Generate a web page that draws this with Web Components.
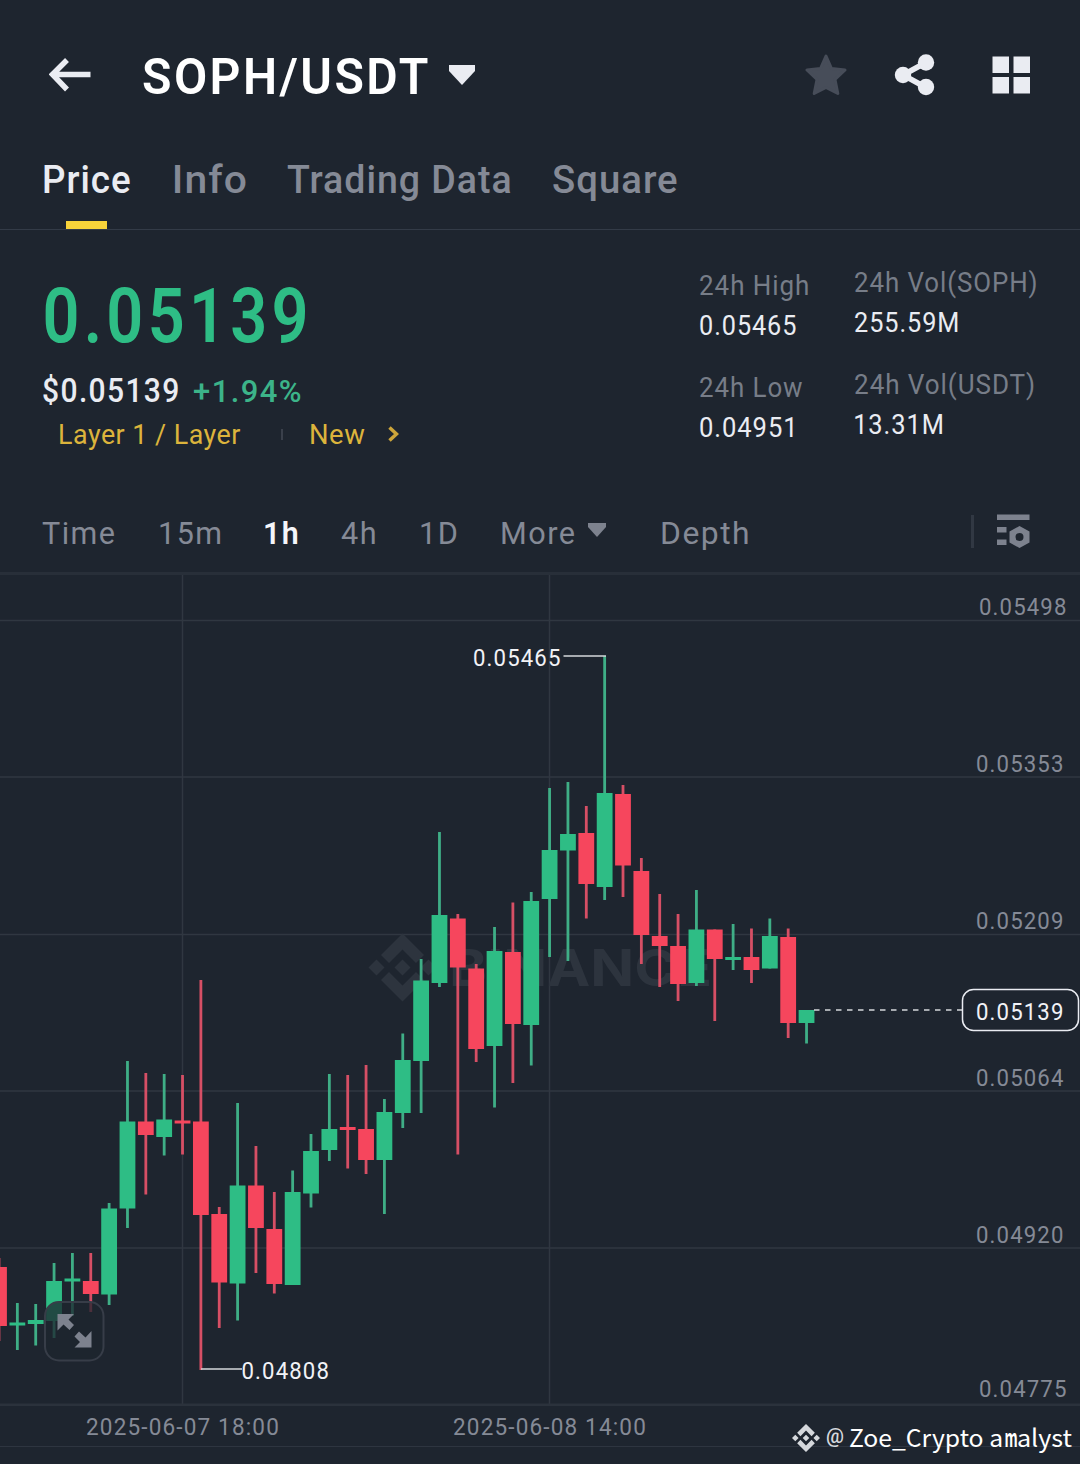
<!DOCTYPE html>
<html lang="en">
<head>
    <meta charset="utf-8">
    <title>SOPH/USDT</title>
    <style>
        body {
            margin: 0;
            background: #1e252f;
        }
    </style>
</head>
<body>
    <trade-page></trade-page>

    <script>
        /**
         * Text scaled horizontally so that its ink fills the given width.
         */
        customElements.define('fit-text', class FitText extends HTMLElement {
            _html = `
                <style>
                    :host { display: block; flex: none; }
                    span { display: inline-block; white-space: pre; transform-origin: 0 50%; }
                </style>
                <span><slot></slot></span>
            `;

            constructor() {
                super();
                this.attachShadow({ mode: 'open' });
                this.shadowRoot.innerHTML = this._html;
            }

            /**
             * Measures the text and sets the scale.
             */
            connectedCallback() {
                const width = Number(this.getAttribute('width'));
                const style = getComputedStyle(this);
                const spacing = parseFloat(style.letterSpacing) || 0;
                const context = document.createElement('canvas').getContext('2d');
                context.font = `${style.fontWeight} ${style.fontSize} ${style.fontFamily}`;
                const box = context.measureText(this.textContent);
                const ink = box.actualBoundingBoxLeft + box.actualBoundingBoxRight + spacing * (this.textContent.length - 1);
                const scale = width / ink;
                const shift = box.actualBoundingBoxLeft * scale;
                this.style.width = `${width}px`;
                this.shadowRoot.querySelector('span').style.transform = `translateX(${shift}px) scaleX(${scale})`;
            }
        });

        /**
         * Top bar with the back arrow, the pair and the actions.
         */
        customElements.define('pair-header', class PairHeader extends HTMLElement {
            _html = `
                <style>
                    :host {
                        display: flex;
                        align-items: center;
                        height: 150px;
                        padding: 0 50px 0 49px;
                        box-sizing: border-box;
                        color: #fff;
                        font-size: 49.500px;
                        font-weight: 600;
                        line-height: 60px;
                        letter-spacing: 2.500px;
                    }
                    svg { display: block; flex: none; fill: #eaecf2; }
                    fit-text { margin: 4px 21px 0 52px; }
                    .actions { display: flex; align-items: center; margin-left: auto; }
                    .share { margin: 0 56px 0 47px; }
                </style>
                <svg width="42" height="34" viewBox="0 0 42 34">
                    <path d="M3 16.500H41.500M18 2L3.500 16.500L18 31.500" fill="none" stroke="#eaecf2" stroke-width="5.500"/>
                </svg>
            `;

            _actions = `
                <svg width="26" height="20" viewBox="0 0 26 20"><path d="M0 0H26V6L13 20L0 6Z"/></svg>
                <div class="actions">
                    <svg width="42" height="42" viewBox="0 0 42 42">
                        <path d="M21 2L26.500 14.500L40 16L30 25.500L32.800 39.500L21 33.500L9.200 39.500L12 25.500L2 16L15.500 14.500Z" fill="#474d59" stroke="#474d59" stroke-width="3" stroke-linejoin="round"/>
                    </svg>
                    <svg class="share" width="42" height="42" viewBox="0 0 42 42">
                        <path d="M32 8.500L9 21L32 33.500" fill="none" stroke="#eaecf2" stroke-width="5.500"/>
                        <circle cx="9" cy="21" r="8.200"/>
                        <circle cx="32" cy="8.500" r="8.200"/>
                        <circle cx="32" cy="33" r="8.200"/>
                    </svg>
                    <svg width="38" height="38" viewBox="0 0 38 38">
                        <path d="M.5.500h16.500v16.500H.500zM21.500 .500h16.500v16.500H21.500zM.5 21h16.500v16.500H.500zM21.500 21h16.500v16.500H21.500z"/>
                    </svg>
                </div>
            `;

            constructor() {
                super();
                this.attachShadow({ mode: 'open' });
                const title = `<fit-text width="285">${this.getAttribute('pair')}</fit-text>`;
                this.shadowRoot.innerHTML = `${this._html}${title}${this._actions}`;
            }
        });

        /**
         * Page tabs.
         */
        customElements.define('page-tabs', class PageTabs extends HTMLElement {
            _html = `
                <style>
                    :host {
                        display: flex;
                        height: 80px;
                        box-sizing: border-box;
                        padding-left: 43.500px;
                        border-bottom: 1px solid #333b47;
                        color: #858a96;
                        font-size: 38.500px;
                        font-weight: 500;
                        line-height: 60px;
                        letter-spacing: 1px;
                    }
                    .tab { position: relative; margin-right: 41.500px; }
                    .first { margin-right: 45px; color: #eaecf2; }
                    .first::after {
                        content: "";
                        position: absolute;
                        left: 22.500px;
                        bottom: 0;
                        width: 41px;
                        height: 8px;
                        background: #f8d33a;
                    }
                </style>
                <div class="tab first"><fit-text width="86">Price</fit-text></div>
                <div class="tab"><fit-text width="71">Info</fit-text></div>
                <div class="tab"><fit-text width="224">Trading Data</fit-text></div>
                <div class="tab"><fit-text width="124">Square</fit-text></div>
            `;

            constructor() {
                super();
                this.attachShadow({ mode: 'open' });
                this.shadowRoot.innerHTML = this._html;
            }
        });

        /**
         * A label with its value below.
         */
        customElements.define('stat-item', class StatItem extends HTMLElement {
            _html = `
                <style>
                    :host { display: block; font-size: 27.500px; line-height: 40px; letter-spacing: 1px; color: #eaecf2; }
                    .label { color: #777d88; font-size: 28px; }
                </style>
            `;

            constructor() {
                super();
                this.attachShadow({ mode: 'open' });
                this.shadowRoot.innerHTML = `${this._html}
                    <fit-text class="label" width="${this.getAttribute('label-width')}">${this.getAttribute('label')}</fit-text>
                    <fit-text width="${this.getAttribute('value-width')}">${this.getAttribute('value')}</fit-text>
                `;
            }
        });

        /**
         * Last price and the 24h statistics.
         */
        customElements.define('price-summary', class PriceSummary extends HTMLElement {
            _html = `
                <style>
                    :host { display: flex; height: 260px; box-sizing: border-box; padding-left: 43px; }
                    .left { width: 657px; padding-top: 48px; }
                    .price { color: #2ebd85; font-size: 76px; font-weight: 600; line-height: 76px; letter-spacing: 5px; margin-left: 2px; }
                    .change { display: flex; gap: 16px; margin-top: 14.500px; font-size: 33.300px; font-weight: 500; line-height: 44px; letter-spacing: 1.500px; color: #eaecf2; }
                    .up { color: #3cb489; font-size: 32px; }
                    .tags { display: flex; align-items: center; margin: 2px 0 0 17px; font-size: 27.700px; line-height: 40px; letter-spacing: .500px; color: #dcb43c; }
                    .line { width: 2px; height: 11px; background: #3a404b; margin: 0 28px 0 41px; }
                    svg { display: block; margin: -2px 0 0 23px; }
                    .column { display: flex; flex-direction: column; gap: 22px; padding-top: 36px; width: 155px; }
                    .second { padding-top: 33px; }
                </style>
                <div class="left">
                    <fit-text class="price" width="260.500">0.05139</fit-text>
                    <div class="change">
                        <fit-text width="134.500">$0.05139</fit-text>
                        <fit-text class="up" width="107">+1.94%</fit-text>
                    </div>
                    <div class="tags">
                        <fit-text width="180">Layer 1 / Layer</fit-text>
                        <div class="line"></div>
                        <fit-text width="54">New</fit-text>
                        <svg width="11" height="16" viewBox="0 0 11 16"><path d="M1.500 1.500L8.500 8L1.500 14.500" fill="none" stroke="#cda53a" stroke-width="3.500"/></svg>
                    </div>
                </div>
                <div class="column">
                    <stat-item label="24h High" label-width="108" value="0.05465" value-width="96"></stat-item>
                    <stat-item label="24h Low" label-width="102.500" value="0.04951" value-width="92.500"></stat-item>
                </div>
                <div class="column second">
                    <stat-item label="24h Vol(SOPH)" label-width="181" value="255.59M" value-width="102.500"></stat-item>
                    <stat-item label="24h Vol(USDT)" label-width="178.500" value="13.31M" value-width="87"></stat-item>
                </div>
            `;

            constructor() {
                super();
                this.attachShadow({ mode: 'open' });
                this.shadowRoot.innerHTML = this._html;
            }
        });

        /**
         * Chart interval picker.
         */
        customElements.define('interval-bar', class IntervalBar extends HTMLElement {
            _html = `
                <style>
                    :host {
                        display: flex;
                        align-items: center;
                        height: 82px;
                        box-sizing: border-box;
                        padding: 0 50px 0 42px;
                        color: #858a96;
                        font-size: 32px;
                        line-height: 40px;
                        letter-spacing: 1.500px;
                    }
                    fit-text { margin: 4px 45.500px 0 0; }
                    .active { color: #f5f6fa; font-weight: 600; }
                    .more { margin-right: 14px; }
                    svg { display: block; fill: #7d828e; }
                    .caret { margin: -2px 56px 0 0; }
                    .line { width: 3px; height: 33px; background: #313843; margin: 0 23px 0 auto; }
                </style>
                <fit-text width="72">Time</fit-text>
                <fit-text width="60">15m</fit-text>
                <fit-text width="33" class="active" style="margin-right: 43px">1h</fit-text>
                <fit-text width="34">4h</fit-text>
                <fit-text width="36">1D</fit-text>
                <fit-text width="72" class="more">More</fit-text>
                <svg class="caret" width="18" height="14" viewBox="0 0 18 14"><path d="M0 0H18V4L9 14L0 4Z"/></svg>
                <fit-text width="86">Depth</fit-text>
                <div class="line"></div>
                <svg width="33" height="34" viewBox="0 0 33 34">
                    <path d="M0 .500H32.500V6H0ZM0 13H9.500V18.500H0ZM0 25.500H9.500V31H0Z"/>
                    <path fill-rule="evenodd" d="M22.500 12L32.500 17.500V28.500L22.500 34L12.500 28.500V17.500ZM22.500 19A4 4 0 0 0 22.500 27A4 4 0 0 0 22.500 19Z"/>
                </svg>
            `;

            constructor() {
                super();
                this.attachShadow({ mode: 'open' });
                this.shadowRoot.innerHTML = this._html;
            }
        });

        /**
         * Candlestick chart with its axes, drawn in page pixels from y = 572.
         */
        customElements.define('candle-chart', class CandleChart extends HTMLElement {
            _style = `
                <style>
                    :host { display: block; height: 892px; }
                    svg { display: block; font-size: 23.500px; letter-spacing: 1.200px; fill: #858a96; }
                    .grid { stroke: #303741; stroke-width: 1.500; }
                    .white { fill: #f1f2f6; }
                    .mark { fill: #2d343e; letter-spacing: 0; }
                </style>
            `;

            /**
             * Candles as [direction, high, body top, body bottom, low].
             */
            _candles = [
                ['r', 1258, 1267, 1326, 1341], ['g', 1303, 1322.5, 1325.5, 1350], ['g', 1304, 1320, 1324, 1345.5],
                ['g', 1263, 1281, 1321, 1338], ['g', 1253, 1278.5, 1281.5, 1316], ['r', 1253, 1281, 1294, 1312],
                ['g', 1203, 1208.5, 1294.5, 1305], ['g', 1061, 1121.5, 1208.5, 1228], ['r', 1073, 1121.5, 1135, 1194.5],
                ['g', 1074, 1119.5, 1137, 1155.5], ['r', 1075, 1120.5, 1123.5, 1154.5], ['r', 980, 1121.5, 1215, 1370],
                ['r', 1207, 1214, 1282.5, 1328], ['g', 1103, 1185.5, 1283.5, 1320.5], ['r', 1146, 1185.5, 1228, 1273],
                ['r', 1192, 1229, 1284, 1293.5], ['g', 1170.5, 1192, 1285, 1285], ['g', 1134, 1151, 1193.5, 1207.5],
                ['g', 1074, 1129, 1150, 1161], ['r', 1075, 1127, 1130, 1168.5], ['r', 1065, 1129, 1160, 1174],
                ['g', 1099, 1112, 1160, 1214], ['g', 1033.5, 1060, 1113, 1128], ['g', 959, 980.5, 1061, 1113],
                ['g', 832, 915, 983, 987], ['r', 914, 918.5, 967.5, 1154.5], ['r', 964, 968.5, 1049, 1062],
                ['g', 927, 951, 1046, 1107.5], ['r', 902.5, 952, 1024, 1083], ['g', 892, 901, 1025, 1065.5],
                ['g', 788, 850, 899, 957], ['g', 782, 834, 850.5, 961], ['r', 806, 833, 884, 918.5],
                ['g', 656, 793, 887, 900], ['r', 785, 794, 865.5, 897], ['r', 858, 871, 935, 964],
                ['r', 894, 936, 946, 987], ['r', 914, 946, 984, 1001], ['g', 890, 929.5, 983, 986],
                ['r', 929.5, 929.5, 959, 1021], ['g', 924, 957, 960, 970], ['r', 928.5, 957, 970, 983],
                ['g', 918.5, 936, 968.5, 968.5], ['r', 928.5, 937, 1023, 1038], ['g', 1010, 1010, 1023, 1043.5]
            ];

            /**
             * Price labels as [text, x, baseline].
             */
            _prices = [
                ['0.05498', 979, 615], ['0.05353', 976, 772], ['0.05209', 976, 929],
                ['0.05064', 976, 1086], ['0.04920', 976, 1243], ['0.04775', 979, 1397]
            ];

            constructor() {
                super();
                this.attachShadow({ mode: 'open' });
                this.shadowRoot.innerHTML = `${this._style}
                    <svg width="1080" height="892" viewBox="0 572 1080 892">
                        <rect y="572" width="1080" height="3" fill="#282f39"/>
                        <path class="grid" d="M0 620.500H1080M0 777H1080M0 934.500H1080M0 1091H1080M0 1248H1080M182.500 575V1404M549.500 575V1404"/>
                        <rect y="1403.500" width="1080" height="2.500" fill="#2b323c"/>
                        <rect y="1446" width="1080" height="1" fill="#2e3540"/>
                        ${this._watermark()}
                        ${this._candles.map(this._drawCandle).join('')}
                        ${this._prices.map(([text, x, y]) => this._text(text, x, y, 88.5)).join('')}
                        ${this._text('2025-06-07 18:00', 86, 1435, 194)}
                        ${this._text('2025-06-08 14:00', 453, 1435, 194)}
                        <g class="white">
                            ${this._text('0.05465', 473, 666, 88.5)}
                            ${this._text('0.04808', 241.5, 1379, 88.5)}
                        </g>
                        <path d="M563.500 656H606M201 1369H242" stroke="#d5d7dc" stroke-width="1.500"/>
                        <path d="M814 1010H962" stroke="#d5d7dc" stroke-width="1.500" stroke-dasharray="5.500 5.500"/>
                        <rect x="962.500" y="989.500" width="116" height="41" rx="11" fill="#1e252f" stroke="#eaecf2" stroke-width="1.500"/>
                        <g class="white">${this._text('0.05139', 976, 1020, 88.5)}</g>
                        ${this._expandButton()}
                    </svg>
                `;
            }

            _text(text, x, y, length) {
                return `<text x="${x}" y="${y}" textLength="${length}" lengthAdjust="spacingAndGlyphs">${text}</text>`;
            }

            _drawCandle([direction, high, top, bottom, low], index) {
                const x = -1 + 18.353 * index;
                const body = direction === 'g' ? '#2ebd85' : '#f6465d';
                const wick = direction === 'g' ? '#3fae86' : '#d64f65';
                return `
                    <rect x="${x - 1.4}" y="${high}" width="2.800" height="${low - high}" fill="${wick}"/>
                    <rect x="${x - 7.9}" y="${top}" width="15.800" height="${bottom - top}" fill="${body}"/>
                `;
            }

            _watermark() {
                return `
                    <g class="mark">
                        <path d="M402.500 933.500L424 955L416 963L402.500 949.500L389 963L381 955ZM402.500 1001.500L424 980L416 972L402.500 985.500L389 972L381 980ZM368.500 967.500L376.500 959.500L384.500 967.500L376.500 975.500ZM420.500 967.500L428.500 959.500L436.500 967.500L428.500 975.500ZM402.500 959.500L410.500 967.500L402.500 975.500L394.500 967.500Z"/>
                        <text x="449" y="986" font-family="Inter, sans-serif" font-size="51" font-weight="700" textLength="263" lengthAdjust="spacingAndGlyphs">BINANCE</text>
                    </g>
                `;
            }

            _expandButton() {
                return `
                    <rect x="45" y="1302" width="58.500" height="58.500" rx="14" fill="#1e252f" fill-opacity=".75" stroke="#373d48" stroke-width="2"/>
                    <path d="M57.500 1314H74L68.500 1319.500L74 1325L69.500 1330L63.500 1324.500L57.500 1330.500ZM91.500 1347.500H74.500L80 1342L74.500 1336.500L79 1331.500L85.500 1337.500L91.500 1331Z" fill="#7d828e"/>
                `;
            }
        });

        /**
         * Author credit over the bottom right corner.
         */
        customElements.define('author-mark', class AuthorMark extends HTMLElement {
            _html = `
                <style>
                    :host {
                        display: flex;
                        align-items: center;
                        position: absolute;
                        right: 8px;
                        bottom: 7px;
                        color: #fff;
                        font-family: "Noto Sans CJK SC", sans-serif;
                        font-size: 24px;
                        line-height: 40px;
                    }
                    svg { display: block; fill: #d5d8dc; margin: 2px 6px 0 0; }
                    .at { color: #d5d8dc; margin: -2px 6px 0 0; font-family: Roboto, sans-serif; font-size: 20px; font-weight: 500; }
                    .narrow { font-weight: 700; margin: 0 1.500px 0 3px; }
                </style>
                <svg width="28" height="28" viewBox="0 0 68 68">
                    <path d="M34 0L55.500 21.500L47.500 29.500L34 16L20.500 29.500L12.500 21.500ZM34 68L55.500 46.500L47.500 38.500L34 52L20.500 38.500L12.500 46.500ZM0 34L8 26L16 34L8 42ZM52 34L60 26L68 34L60 42ZM34 26L42 34L34 42L26 34Z"/>
                </svg>
                <fit-text class="at" width="18">@</fit-text>
                <fit-text width="151.500">Zoe_Crypto a</fit-text>
                <fit-text class="narrow" width="12">m</fit-text>
                <fit-text width="54">alyst</fit-text>
            `;

            constructor() {
                super();
                this.attachShadow({ mode: 'open' });
                this.shadowRoot.innerHTML = this._html;
            }
        });

        /**
         * The whole page.
         */
        customElements.define('trade-page', class TradePage extends HTMLElement {
            _html = `
                <style>
                    :host {
                        display: block;
                        position: relative;
                        width: 1080px;
                        height: 1464px;
                        overflow: hidden;
                        background: #1e252f;
                        font-family: Roboto, sans-serif;
                    }
                </style>
                <pair-header pair="SOPH/USDT"></pair-header>
                <page-tabs></page-tabs>
                <price-summary></price-summary>
                <interval-bar></interval-bar>
                <candle-chart></candle-chart>
                <author-mark></author-mark>
            `;

            constructor() {
                super();
                this.attachShadow({ mode: 'open' });
                this.shadowRoot.innerHTML = this._html;
            }
        });
    </script>
</body>
</html>
